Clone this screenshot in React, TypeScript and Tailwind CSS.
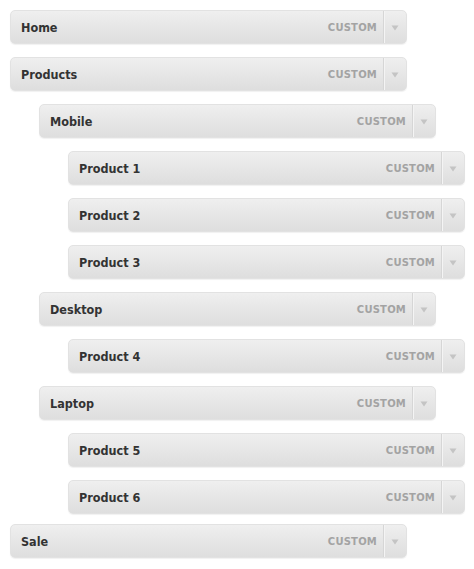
import React from "react";

type Item = { label: string; level: number };

const items: Item[] = [
  { label: "Home", level: 0 },
  { label: "Products", level: 0 },
  { label: "Mobile", level: 1 },
  { label: "Product 1", level: 2 },
  { label: "Product 2", level: 2 },
  { label: "Product 3", level: 2 },
  { label: "Desktop", level: 1 },
  { label: "Product 4", level: 2 },
  { label: "Laptop", level: 1 },
  { label: "Product 5", level: 2 },
  { label: "Product 6", level: 2 },
  { label: "Sale", level: 0 },
];

const indent = ["ml-0", "ml-[29px]", "ml-[58px]"];

function Row({ item, last }: { item: Item; last: boolean }) {
  return (
    <div
      className={`${indent[item.level]} ${last ? "-mt-[3px]" : ""} flex h-[34px] w-[397px] items-stretch rounded-[5px] border border-[#e2e2e2] bg-gradient-to-b from-[#efefef] to-[#dedede] shadow-[0_1px_1px_rgba(0,0,0,0.06)]`}
    >
      <div
        className="flex flex-1 items-center pl-[10px] pt-[2px] text-[12.5px] font-bold text-[#333333]"
        style={{ fontFamily: '"DejaVu Sans Condensed", "DejaVu Sans", Verdana, sans-serif' }}
      >
        {item.label}
      </div>
      <div className="flex items-center pr-[6px] pt-[1px] text-[10px] font-bold tracking-[0.2px] text-[#a3a3a3]">
        CUSTOM
      </div>
      <div className="flex w-[23px] items-center justify-center border-l border-l-[#d6d6d6] pt-[2px] shadow-[inset_1px_0_0_#f4f4f4]">
        <svg width="8" height="6" viewBox="0 0 8 6">
          <path d="M0.5 0.5 H7.5 L4 5.5 Z" fill="#c4c4c4" />
        </svg>
      </div>
    </div>
  );
}

export default function App() {
  return (
    <div
      className="min-h-[569px] w-[474px] bg-white pl-[10px] pt-[10px]"
      style={{ fontFamily: '"DejaVu Sans", Verdana, sans-serif' }}
    >
      <div className="flex flex-col gap-[13px]">
        {items.map((it, i) => (
          <Row key={it.label} item={it} last={i === items.length - 1} />
        ))}
      </div>
    </div>
  );
}
